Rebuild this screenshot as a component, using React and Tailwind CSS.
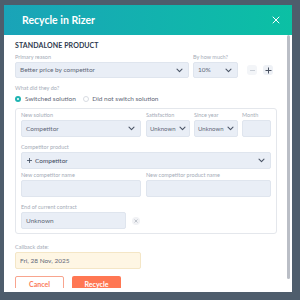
import React from "react";

const Chevron = ({ className = "" }) => (
  <svg width="7" height="5" viewBox="0 0 7 5" className={"shrink-0 " + className}>
    <path d="M1 1.2 L3.5 3.7 L6 1.2" fill="none" stroke="#4b5566" strokeWidth="1.1" strokeLinecap="round" strokeLinejoin="round" />
  </svg>
);

const Label = ({ children, className = "" }) => (
  <div className={"text-[5.5px] leading-[7px] text-[#a5acb7] mb-[1px] whitespace-nowrap " + className}>{children}</div>
);

const Select = ({ children, className = "", h = "h-[17px]" }) => (
  <div className={"flex items-center justify-between rounded-[2px] border border-[#dfe5ee] bg-[#e9eef6] " + h + " " + (className || "pl-[4px] pr-[5px] text-[6.5px]") + " text-[#5f6878]"}>
    <span className="whitespace-nowrap">{children}</span>
    <Chevron />
  </div>
);

const Input = ({ children, className = "" }) => (
  <div className={"flex items-center h-[17px] rounded-[2px] border border-[#dfe5ee] bg-[#e9eef6] pl-[4px] text-[6.5px] text-[#5f6878] " + className}>
    {children}
  </div>
);

export default function App() {
  return (
    <div className="w-[300px] h-[300px] bg-[#4e5d6c] pt-[5px] pl-[4px] overflow-hidden" style={{ fontFamily: "Lato, 'Open Sans', sans-serif" }}>
      <div className="w-[288px] h-[287px] bg-white flex flex-col">
        <div className="h-[30px] flex items-center justify-between pl-[18px] pr-[12px] bg-linear-to-r from-[#1aa3b8] to-[#0bc0a4]">
          <span className="text-white font-bold text-[10.5px] leading-[12px]">Recycle in Rizer</span>
          <svg width="8" height="8" viewBox="0 0 8 8">
            <path d="M1 1 L7 7 M7 1 L1 7" stroke="white" strokeWidth="1" strokeLinecap="round" />
          </svg>
        </div>
        <div className="relative h-[253px] overflow-hidden pl-[11px] pr-[15px] pt-[6px]">
          <div className="absolute right-[2px] top-0 w-[3px] h-[244px] rounded-[2px] bg-[#babec6]" />
          <div className="text-[7px] leading-[9px] font-bold text-[#2e3a4e] tracking-[0.1px]">STANDALONE PRODUCT</div>

          <div className="mt-[4px] flex items-end">
            <div className="w-[174px]">
              <Label>Primary reason</Label>
              <Select h="h-[16px]">Better price by competitor</Select>
            </div>
            <div className="w-[45px] ml-[4px]">
              <Label>By how much?</Label>
              <Select h="h-[16px]">10%</Select>
            </div>
            <div className="ml-[9px] mb-[3px] w-[10px] h-[10px] rounded-[3px] bg-[#f3f5f8] flex items-center justify-center">
              <div className="w-[5px] h-[1px] bg-[#c9ced6]" />
            </div>
            <div className="ml-[6px] mb-[3px] w-[10px] h-[10px] rounded-[3px] bg-[#eef1f6] flex items-center justify-center">
              <svg width="7" height="7" viewBox="0 0 7 7">
                <path d="M3.5 0.5 V6.5 M0.5 3.5 H6.5" stroke="#4a5262" strokeWidth="1" />
              </svg>
            </div>
          </div>

          <div className="mt-[7px] text-[5.5px] leading-[7px] text-[#a5acb7]">What did they do?</div>
          <div className="mt-[3px] h-[8px] flex items-center text-[6.5px] text-[#5f6878]">
            <div className="w-[6px] h-[6px] rounded-full bg-[#1fb4b2] flex items-center justify-center">
              <div className="w-[2px] h-[2px] rounded-full bg-white" />
            </div>
            <span className="ml-[4px]">Switched solution</span>
            <div className="ml-[7px] w-[6.5px] h-[6.5px] rounded-full border border-[#d8dce2] bg-white" />
            <span className="ml-[3px]">Did not switch solution</span>
          </div>

          <div className="mt-[5px] w-[262px] rounded-[3px] border border-[#e4e7ec] px-[5px] pt-[3px] pb-[4px]">
            <div className="flex">
              <div className="w-[120px]">
                <Label>New solution</Label>
                <Select>Competitor</Select>
              </div>
              <div className="w-[44px] ml-[5px]">
                <Label>Satisfaction</Label>
                <Select className="pl-[3px] pr-[3px] text-[6px]">Unknown</Select>
              </div>
              <div className="w-[44px] ml-[4px]">
                <Label>Since year</Label>
                <Select className="pl-[3px] pr-[3px] text-[6px]">Unknown</Select>
              </div>
              <div className="w-[29px] ml-[4px]">
                <Label>Month</Label>
                <Input />
              </div>
            </div>

            <div className="mt-[7px]">
              <Label>Competitor product</Label>
              <div className="flex items-center justify-between h-[17px] rounded-[2px] border border-[#dfe5ee] bg-[#e9eef6] pl-[5px] pr-[5px] text-[6.5px] text-[#3e4a5e]">
                <span className="flex items-center">
                  <svg width="5" height="5" viewBox="0 0 5 5">
                    <path d="M2.5 0 V5 M0 2.5 H5" stroke="#3e4a5e" strokeWidth="0.8" />
                  </svg>
                  <span className="ml-[3px]">Competitor</span>
                </span>
                <Chevron />
              </div>
            </div>

            <div className="mt-[3px] flex">
              <div className="w-[120px]">
                <Label>New competitor name</Label>
                <Input />
              </div>
              <div className="w-[125px] ml-[5px]">
                <Label>New competitor product name</Label>
                <Input />
              </div>
            </div>

            <div className="mt-[7px]">
              <Label>End of current contract</Label>
              <div className="flex items-center">
                <Input className="w-[105px]">Unknown</Input>
                <div className="ml-[6px] w-[8px] h-[8px] rounded-full bg-[#f1f2f5] flex items-center justify-center">
                  <svg width="4" height="4" viewBox="0 0 4 4">
                    <path d="M0.5 0.5 L3.5 3.5 M3.5 0.5 L0.5 3.5" stroke="#b4b9c2" strokeWidth="0.8" />
                  </svg>
                </div>
              </div>
            </div>
          </div>

          <div className="mt-[10px]">
            <Label>Callback date:</Label>
            <div className="w-[126px] h-[17px] flex items-center rounded-[2px] border border-[#f4e6c6] bg-[#fef6e4] pl-[4px] text-[6.5px] text-[#5f6878]">
              Fri, 28 Nov, 2025
            </div>
          </div>

          <div className="mt-[7px] flex">
            <div className="w-[49px] h-[17px] rounded-[2px] border border-[#f8a48e] bg-white flex items-center justify-center text-[7px] font-bold text-[#fb7c5b]">
              Cancel
            </div>
            <div className="ml-[8px] w-[49px] h-[17px] rounded-[2px] bg-[#ff7753] flex items-center justify-center text-[7px] font-bold text-white">
              Recycle
            </div>
          </div>
        </div>
        <div className="h-[4px] bg-white" />
      </div>
    </div>
  );
}
